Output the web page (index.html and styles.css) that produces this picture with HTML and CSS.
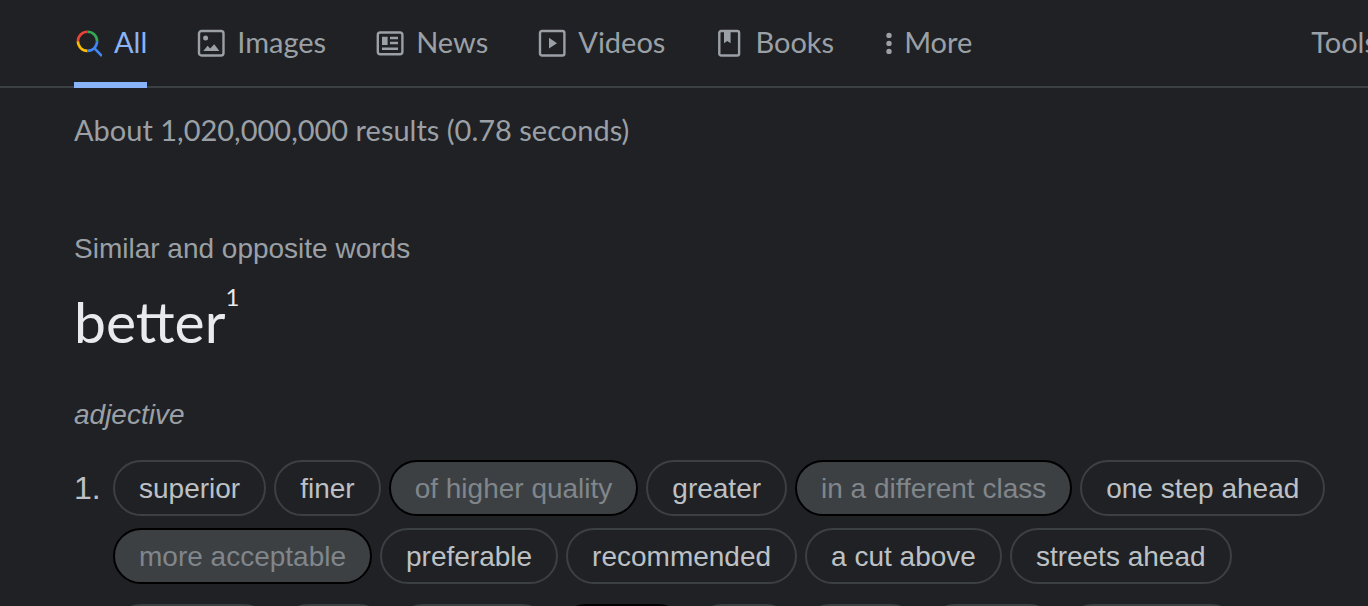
FILE: index.html
```html
<!DOCTYPE html>
<html lang="en">
<head>
    <meta charset="UTF-8">
    <meta name="viewport" content="width=device-width, initial-scale=1.0">
    <title>better - Search</title>
    <link rel="stylesheet" href="styles.css">
</head>
<body>
<nav class="tabs">
    <a href="#" class="tab active">
        <svg class="tab-icon" viewBox="0 0 28 28" fill="none" stroke-width="2.6">
            <path d="M3.9 12.3A9.6 9.6 0 0 1 13.5 2.7" stroke="#ea4335"/>
            <path d="M13.5 2.7A9.6 9.6 0 0 1 23.1 12.3" stroke="#34a853"/>
            <path d="M3.9 12.3A9.6 9.6 0 0 0 13.5 21.9" stroke="#fbbc04"/>
            <path d="M23.1 12.3A9.6 9.6 0 0 1 13.5 21.9M20 18.9L28 27" stroke="#4285f4"/>
        </svg>
        <span>All</span>
    </a>
    <a href="#" class="tab">
        <svg class="tab-icon" viewBox="0 0 28 28" fill="currentColor">
            <rect x="2" y="2" width="24.5" height="24.5" rx="2.5" fill="none" stroke="currentColor" stroke-width="2.4"/>
            <circle cx="8.6" cy="9" r="2.5"/>
            <path d="M6.3 22L10.6 16.8L13.2 19.6L17.2 15.3L22.4 22Z"/>
        </svg>
        <span>Images</span>
    </a>
    <a href="#" class="tab">
        <svg class="tab-icon" viewBox="0 0 28 28" fill="currentColor">
            <rect x="1.8" y="3.5" width="24.6" height="21.8" rx="2.5" fill="none" stroke="currentColor" stroke-width="2.4"/>
            <path d="M6 7.7H11.6V16H6ZM14 7.7H22V10.2H14ZM14 12.8H22V15.3H14ZM6 18.5H22V21H6Z"/>
        </svg>
        <span>News</span>
    </a>
    <a href="#" class="tab">
        <svg class="tab-icon" viewBox="0 0 28 28" fill="currentColor">
            <rect x="2" y="2" width="24.4" height="24.5" rx="2" fill="none" stroke="currentColor" stroke-width="2.4"/>
            <path d="M11 8.8V19.6L19 14.2Z"/>
        </svg>
        <span>Videos</span>
    </a>
    <a href="#" class="tab">
        <svg class="tab-icon" viewBox="0 0 28 28" fill="currentColor">
            <rect x="4.3" y="2" width="19.8" height="24.5" rx="1.8" fill="none" stroke="currentColor" stroke-width="2.4"/>
            <path d="M9 2H15.6V14.2L12.3 12L9 14.2Z"/>
        </svg>
        <span>Books</span>
    </a>
    <a href="#" class="tab more">
        <svg class="dots-icon" viewBox="0 0 10 28" fill="currentColor">
            <circle cx="5" cy="6.4" r="2.7"/>
            <circle cx="5" cy="14.4" r="2.7"/>
            <circle cx="5" cy="22.4" r="2.7"/>
        </svg>
        <span>More</span>
    </a>
    <a href="#" class="tab tools">Tools</a>
</nav>

<main class="results">
    <p class="stats">About 1,020,000,000 results (0.78 seconds)</p>

    <h2 class="section-title">Similar and opposite words</h2>
    <h1 class="word">better<sup>1</sup></h1>
    <p class="word-class">adjective</p>

    <div class="sense">
        <span class="sense-number">1.</span>
        <div class="synonyms">
            <div class="chips">
                <a href="#" class="chip">superior</a>
                <a href="#" class="chip">finer</a>
                <span class="chip disabled">of higher quality</span>
                <a href="#" class="chip">greater</a>
                <span class="chip disabled">in a different class</span>
                <a href="#" class="chip">one step ahead</a>
                <span class="chip disabled">more acceptable</span>
                <a href="#" class="chip">preferable</a>
                <a href="#" class="chip">recommended</a>
                <a href="#" class="chip">a cut above</a>
                <a href="#" class="chip">streets ahead</a>
            </div>
            <div class="chips">
                <a href="#" class="chip">healthier</a>
                <a href="#" class="chip">fitter</a>
                <a href="#" class="chip">stronger</a>
                <span class="chip disabled">less ill</span>
                <a href="#" class="chip">well</a>
                <a href="#" class="chip">wiser</a>
                <a href="#" class="chip">higher</a>
                <a href="#" class="chip">improving</a>
            </div>
        </div>
    </div>
</main>
</body>
</html>
```
FILE: styles.css
```css
* {
    box-sizing: border-box;
}

html {
    height: 100%;
    overflow: hidden;
}

body {
    height: 100%;
    margin: 0;
    overflow: hidden;
    background-color: #202124;
    color: #bdc1c6;
    font-family: "Liberation Sans", Arial, sans-serif;
    font-size: 28px;
}

.tabs {
    display: flex;
    gap: 50px;
    height: 88px;
    padding-left: 74px;
    border-bottom: 2px solid #3c4043;
    font-family: Lato, sans-serif;
    font-size: 29px;
}

.tab {
    display: flex;
    flex-shrink: 0;
    align-items: center;
    gap: 12px;
    height: 88px;
    padding-top: 4px;
    border-bottom: 6px solid transparent;
    color: #9aa0a6;
    line-height: 32px;
    text-decoration: none;
}

.tab span {
    padding-bottom: 2px;
}

.tab.active {
    border-bottom-color: #8ab4f8;
    color: #8ab4f8;
}

.tab-icon {
    width: 28px;
    height: 28px;
}

.dots-icon {
    width: 10px;
    height: 28px;
}

.more {
    gap: 10px;
}

.tools {
    margin-left: auto;
    margin-right: -9px;
    padding-bottom: 2px;
}

.results {
    padding: 0 36px 0 74px;
}

.stats {
    margin: 24px 0 0;
    color: #9aa0a6;
    font-family: Lato, sans-serif;
    font-size: 29px;
    line-height: 36px;
}

.section-title {
    margin: 83px 0 0;
    color: #9aa0a6;
    font-size: 28px;
    font-weight: normal;
    line-height: 36px;
}

.word {
    display: flex;
    margin: 18px 0 0;
    color: #e8eaed;
    font-family: Lato, sans-serif;
    font-size: 57px;
    font-weight: normal;
    line-height: 72px;
}

.word sup {
    font-size: 24px;
    line-height: 24px;
}

.word-class {
    margin: 40px 0 0;
    color: #9aa0a6;
    font-style: italic;
    line-height: 36px;
}

.sense {
    display: flex;
    margin-top: 27px;
}

.sense-number {
    flex: 0 0 39px;
    font-size: 32px;
    line-height: 56px;
}

.chips {
    display: flex;
    flex-wrap: wrap;
    gap: 12px 8px;
    margin-bottom: 20px;
}

.chip {
    padding: 2px 24px 0;
    border: 2px solid #3c4043;
    border-radius: 28px;
    color: #bdc1c6;
    line-height: 50px;
    text-decoration: none;
    white-space: nowrap;
}

.chip.disabled {
    border-color: #000000;
    background-color: #3c4043;
    color: #80868b;
}
```
